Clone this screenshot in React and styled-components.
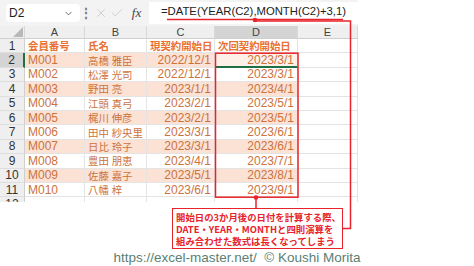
import React from "react";
import styled, { createGlobalStyle } from "styled-components";
import { ChevronDown, X, Check } from "lucide-react";

const RED = "#e8232b";
const GREEN = "#1e7145";
const PEACH = "#fbe2d5";
const TEXT = "#cc733d";
const HEAD_TEXT = "#e97132";

const GlobalStyle = createGlobalStyle`
  html, body { margin: 0; padding: 0; background: #fff; }
  body { font-family: "Liberation Sans", "Noto Sans CJK JP", sans-serif; }
  * { box-sizing: border-box; }
`;

const Page = styled.div`
  position: relative;
  width: 474px;
  height: 266px;
  overflow: hidden;
  background: #fff;
`;

const Sheet = styled.div`
  width: 358px;
  display: flex;
  flex-direction: column;
`;

const Toolbar = styled.div`
  height: 26px;
  background: #f3f3f3;
  display: flex;
  align-items: center;
  padding-left: 6px;
`;

const NameBox = styled.div`
  width: 74px;
  height: 18px;
  background: #fff;
  border-radius: 4px;
  display: flex;
  align-items: center;
  justify-content: space-between;
  padding: 0 6px 0 3px;
  font-size: 12px;
  color: #222;
`;

const Dots = styled.div`
  width: 12px;
  text-align: center;
  font-size: 12px;
  color: #777;
  font-weight: bold;
`;

const ToolIcon = styled.div`
  width: ${(p) => p.$w}px;
  display: flex;
  justify-content: center;
  align-items: center;
  color: ${(p) => p.$color || "#c4c4c4"};
`;

const Fx = styled.span`
  font-family: "Liberation Serif", serif;
  font-style: italic;
  font-size: 13px;
  color: #444;
`;

const FormulaBox = styled.div`
  flex: 1;
  height: 22px;
  background: #fff;
  display: flex;
  align-items: flex-start;
  padding: 3px 0 0 12px;
  font-size: 11.3px;
  line-height: 13px;
  color: #222;
  white-space: nowrap;
`;

const Grid = styled.div`
  display: grid;
  grid-template-columns: 25px 60px 62px 68px 83px 60px;
  grid-template-rows: 13px repeat(12, 14.4px);
  height: 176px;
  overflow: hidden;
`;

const ColHead = styled.div`
  background: ${(p) => (p.$selected ? "#d4d4d4" : "#efefef")};
  border-right: 1px solid #d8d8d8;
  border-bottom: 1px solid #cfcfcf;
  display: flex;
  align-items: center;
  justify-content: center;
  font-size: 11px;
  color: #444;
`;

const Corner = styled(ColHead)`
  justify-content: flex-end;
  align-items: flex-end;
  padding: 0 1px 1px 0;
`;

const RowHead = styled.div`
  background: ${(p) => (p.$selected ? "#d4d4d4" : "#efefef")};
  border-bottom: 1px solid #dedede;
  border-right: ${(p) => (p.$selected ? `2px solid ${GREEN}` : "1px solid #cfcfcf")};
  display: flex;
  align-items: center;
  justify-content: center;
  font-size: 12px;
  color: #333;
`;

const Cell = styled.div`
  background: ${(p) => p.$fill || "#fff"};
  border-right: 1px solid #e4e4e4;
  border-bottom: ${(p) => (p.$active ? `2px solid ${GREEN}` : "1px solid #e4e4e4")};
  display: flex;
  align-items: center;
  justify-content: ${(p) => (p.$right ? "flex-end" : "flex-start")};
  padding: 0 3px;
  font-size: ${(p) => (p.$cjk ? "10.4px" : "12px")};
  font-weight: ${(p) => (p.$bold ? 700 : 400)};
  color: ${(p) => (p.$bold ? HEAD_TEXT : TEXT)};
  white-space: nowrap;
`;

const Overlay = styled.svg`
  position: absolute;
  left: 0;
  top: 0;
  pointer-events: none;
`;

const Callout = styled.div`
  position: absolute;
  left: 172px;
  top: 208px;
  width: 171px;
  height: 41px;
  border: 1.5px solid ${RED};
  background: #fff;
  display: flex;
  flex-direction: column;
  justify-content: center;
  padding: 0 3px;
  font-family: "Noto Sans CJK JP", sans-serif;
  font-weight: 700;
  font-size: 9.4px;
  line-height: 12px;
  color: ${RED};
  white-space: nowrap;
`;

const CalloutLine = styled.div`
  height: 12px;
`;

const Footer = styled.div`
  margin-top: 48px;
  width: 474px;
  text-align: center;
  font-size: 13.5px;
  line-height: 16px;
  color: #5b7f73;
`;

const rows = [
  ["M001", "高橋 雅臣", "2022/12/1", "2023/3/1"],
  ["M002", "松澤 光司", "2022/12/1", "2023/3/1"],
  ["M003", "野田 亮", "2023/1/1", "2023/4/1"],
  ["M004", "江頭 真弓", "2023/2/1", "2023/5/1"],
  ["M005", "梶川 伸彦", "2023/2/1", "2023/5/1"],
  ["M006", "田中 紗央里", "2023/3/1", "2023/6/1"],
  ["M007", "日比 玲子", "2023/3/1", "2023/6/1"],
  ["M008", "豊田 朋恵", "2023/4/1", "2023/7/1"],
  ["M009", "佐藤 嘉子", "2023/5/1", "2023/8/1"],
  ["M010", "八幡 梓", "2023/6/1", "2023/9/1"],
];

export default function App() {
  return (
    <Page>
      <GlobalStyle />
      <Sheet>
        <Toolbar>
          <NameBox>
            <span>D2</span>
            <ChevronDown size={11} color="#555" strokeWidth={1.8} />
          </NameBox>
          <Dots>⋮</Dots>
          <ToolIcon $w={18}>
            <X size={14} strokeWidth={1.3} />
          </ToolIcon>
          <ToolIcon $w={14}>
            <Check size={14} strokeWidth={1.3} />
          </ToolIcon>
          <ToolIcon $w={25} $color="#444">
            <Fx>fx</Fx>
          </ToolIcon>
          <FormulaBox>=DATE(YEAR(C2),MONTH(C2)+3,1)</FormulaBox>
        </Toolbar>
        <Grid>
          <Corner>
            <svg width="10" height="10" viewBox="0 0 10 10">
              <polygon points="10,0 10,10 0,10" fill="#b8b8b8" />
            </svg>
          </Corner>
          {["A", "B", "C", "D", "E"].map((c) => (
            <ColHead key={c} $selected={c === "D"}>
              {c}
            </ColHead>
          ))}

          <RowHead>1</RowHead>
          <Cell $bold $cjk>会員番号</Cell>
          <Cell $bold $cjk>氏名</Cell>
          <Cell $bold $cjk>現契約開始日</Cell>
          <Cell $bold $cjk>次回契約開始日</Cell>
          <Cell />

          {rows.map((r, i) => {
            const n = i + 2;
            const fill = n % 2 === 0 ? PEACH : "#fff";
            return (
              <React.Fragment key={n}>
                <RowHead $selected={n === 2}>{n}</RowHead>
                <Cell $fill={fill}>{r[0]}</Cell>
                <Cell $fill={fill} $cjk>{r[1]}</Cell>
                <Cell $fill={fill} $right>{r[2]}</Cell>
                <Cell $fill={n === 2 ? "#fdf0e8" : fill} $right $active={n === 2}>
                  {r[3]}
                </Cell>
                <Cell />
              </React.Fragment>
            );
          })}
          <RowHead>12</RowHead>
          <Cell />
          <Cell />
          <Cell />
          <Cell />
          <Cell />
        </Grid>
      </Sheet>
      <Footer>https://excel-master.net/&nbsp; © Koushi Morita</Footer>

      <Overlay width="474" height="266" viewBox="0 0 474 266">
        <line x1="167" y1="19.5" x2="343" y2="19.5" stroke={RED} strokeWidth="1.5" />
        <path d="M255 21 H350.5 V228.5 H343" fill="none" stroke={RED} strokeWidth="1.5" />
        <circle cx="255" cy="20" r="2.3" fill={RED} />
        <rect x="215.5" y="53.2" width="82.5" height="144" fill="none" stroke={RED} strokeWidth="1.5" />
        <line x1="256" y1="197" x2="256" y2="208" stroke={RED} strokeWidth="1.5" />
        <circle cx="256" cy="197.5" r="2.3" fill={RED} />
      </Overlay>
      <Callout>
        <CalloutLine>開始日の3か月後の日付を計算する際、</CalloutLine>
        <CalloutLine>DATE・YEAR・MONTHと四則演算を</CalloutLine>
        <CalloutLine>組み合わせた数式は長くなってしまう</CalloutLine>
      </Callout>
    </Page>
  );
}
